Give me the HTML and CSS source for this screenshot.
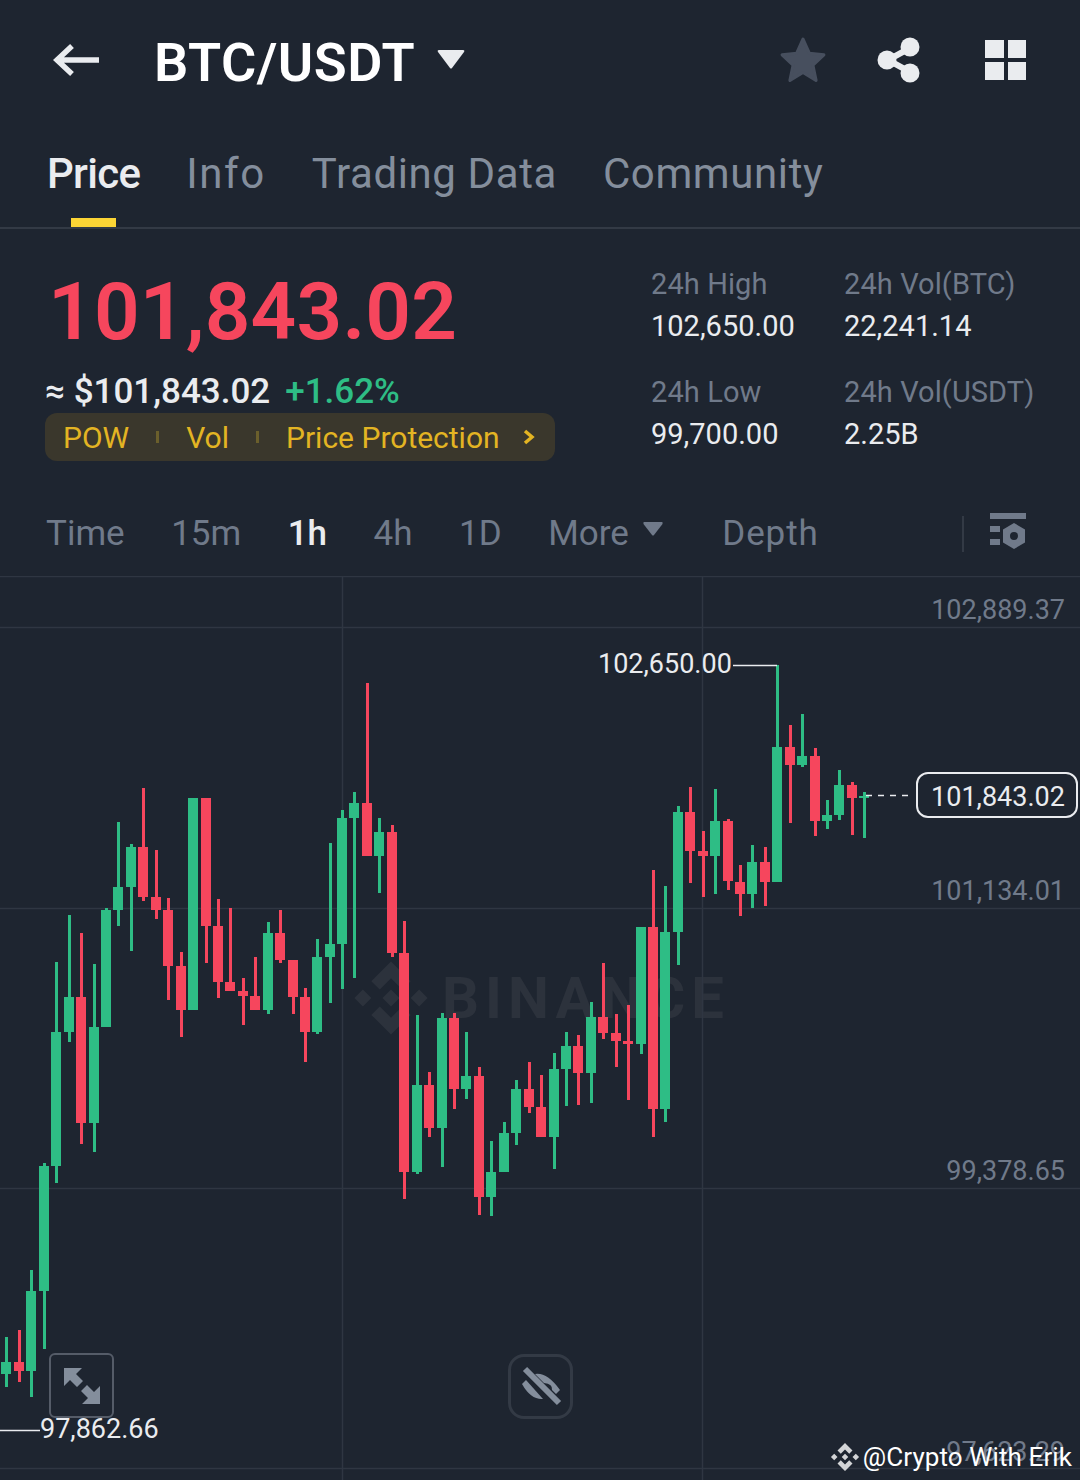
FILE: index.html
```html
<!DOCTYPE html>
<html lang="en">
<head>
    <meta charset="UTF-8">
    <meta name="viewport" content="width=device-width, initial-scale=1.0">
    <title>BTC/USDT</title>
    <link rel="stylesheet" href="styles.css">
</head>
<body>
    <header class="top-bar">
        <svg class="back" width="46" height="34" viewBox="0 0 46 34">
            <path d="M19 3 L4 17 L19 31 M4 17 H46" fill="none" stroke="#eaecef" stroke-width="5.500"/>
        </svg>
        <h1 class="pair">BTC/USDT</h1>
        <svg class="pair-caret" width="28" height="20" viewBox="0 0 28 20">
            <path d="M2 1 H26 Q28 1 27 3 L15 19 Q14 20 13 19 L1 3 Q0 1 2 1 Z" fill="#eaecef"/>
        </svg>
        <div class="top-icons">
            <svg width="48" height="48" viewBox="0 0 46 46">
                <path d="M23 3 L29 16.5 L43 18 L32.5 28 L35.5 42.5 L23 35 L10.500 42.500 L13.500 28 L3 18 L17 16.500 Z" fill="#474f5e" stroke="#474f5e" stroke-width="3" stroke-linejoin="round"/>
            </svg>
            <svg width="46" height="46" viewBox="0 0 46 46">
                <path d="M34 11 L12 23 L34 35" fill="none" stroke="#eaecef" stroke-width="6"/>
                <circle cx="34" cy="10" r="9.500" fill="#eaecef"/>
                <circle cx="11" cy="23" r="9.500" fill="#eaecef"/>
                <circle cx="34" cy="36" r="9.500" fill="#eaecef"/>
            </svg>
            <div class="grid-icon"><i></i><i></i><i></i><i></i></div>
        </div>
    </header>

    <nav class="tabs">
        <a class="tab active">Price</a>
        <a class="tab tab-info">Info</a>
        <a class="tab">Trading Data</a>
        <a class="tab">Community</a>
    </nav>

    <section class="stats">
        <div class="stats-left">
            <div class="last-price">101,843.02</div>
            <div class="sub-price">
                <span>≈ $101,843.02</span>
                <span class="up">+1.62%</span>
            </div>
            <div class="tags">
                <span>POW</span><i class="tag-sep"></i>
                <span>Vol</span><i class="tag-sep"></i>
                <span>Price Protection</span>
                <svg width="14" height="18" viewBox="0 0 14 18">
                    <path d="M3 3 L10 9 L3 15" fill="none" stroke="#e3b423" stroke-width="3.500"/>
                </svg>
            </div>
        </div>
        <div class="stats-right">
            <div class="stat"><label>24h High</label><b>102,650.00</b></div>
            <div class="stat"><label>24h Vol(BTC)</label><b>22,241.14</b></div>
            <div class="stat"><label>24h Low</label><b>99,700.00</b></div>
            <div class="stat"><label>24h Vol(USDT)</label><b>2.25B</b></div>
        </div>
    </section>

    <div class="intervals">
        <span>Time</span>
        <span>15m</span>
        <span class="active">1h</span>
        <span>4h</span>
        <span>1D</span>
        <span class="more">More
            <svg width="20" height="14" viewBox="0 0 20 14"><path d="M1 0 H19 Q20 0 19.500 2 L11 13 Q10 14 9 13 L0.500 2 Q0 0 1 0 Z" fill="#707a8a"/></svg>
        </span>
        <span class="depth">Depth</span>
        <i class="interval-sep"></i>
        <svg class="chart-settings" width="38" height="38" viewBox="0 0 38 38">
            <rect x="1" y="1" width="36" height="6" fill="#707a8a"/>
            <rect x="1" y="14" width="10" height="6" fill="#707a8a"/>
            <rect x="1" y="27" width="10" height="6" fill="#707a8a"/>
            <path d="M25 11 L36 17.500 V30.500 L25 37 L14 30.500 V17.500 Z M25 20 A4 4 0 1 0 25 28 A4 4 0 1 0 25 20 Z" fill="#707a8a" fill-rule="evenodd"/>
        </svg>
    </div>

    <main class="chart">
        <div class="watermark">
            <svg width="90" height="90" viewBox="0 0 32 32">
                <path d="M16 3 L23 10 L20 13 L16 9 L12 13 L9 10 Z M16 29 L23 22 L20 19 L16 23 L12 19 L9 22 Z M3 16 L6 13 L9 16 L6 19 Z M29 16 L26 13 L23 16 L26 19 Z M16 13 L19 16 L16 19 L13 16 Z" fill="#2c323c"/>
            </svg>
            <span>BINANCE</span>
        </div>

        <svg id="plot" class="plot" width="1080" height="904" viewBox="0 576 1080 904"></svg>

        <span class="axis-label y-889">102,889.37</span>
        <span class="axis-label y-134">101,134.01</span>
        <span class="axis-label y-378">99,378.65</span>
        <span class="axis-label y-623">97,623.29</span>

        <span class="mark high-mark">102,650.00</span>
        <span class="mark low-mark">97,862.66</span>
        <span class="price-pill">101,843.02</span>

        <div class="float-btn expand-btn">
            <svg width="40" height="40" viewBox="0 0 40 40">
                <path d="M2 2 H20 L14 8 L21 15 L15 21 L8 14 L2 20 Z M38 38 H20 L26 32 L19 25 L25 19 L32 26 L38 20 Z" fill="#848e9c"/>
            </svg>
        </div>
        <div class="float-btn hide-btn">
            <svg width="44" height="44" viewBox="0 0 44 44">
                <path d="M6 4 L40 38" stroke="#848e9c" stroke-width="6" fill="none"/>
                <path d="M16 9 Q28 7 41 25 L37 29 L33 25 Q34 19 25 18 Z" fill="#848e9c"/>
                <path d="M3 19 L7 15 L24 34 Q12 35 3 19 Z" fill="#848e9c"/>
            </svg>
        </div>

        <div class="credit">
            <svg width="30" height="30" viewBox="0 0 32 32">
                <path d="M16 1 L24 9 L20.500 12.500 L16 8 L11.500 12.500 L8 9 Z M16 31 L24 23 L20.500 19.500 L16 24 L11.500 19.500 L8 23 Z M1 16 L4.500 12.500 L8 16 L4.500 19.500 Z M31 16 L27.500 12.500 L24 16 L27.500 19.500 Z M16 12.500 L19.500 16 L16 19.500 L12.500 16 Z" fill="#d4d5d7"/>
            </svg>
            <span>@Crypto With Erik</span>
        </div>
    </main>

    <script src="chart.js"></script>
</body>
</html>
```

FILE: styles.css
```css
* {
    margin: 0;
    padding: 0;
    box-sizing: border-box;
}

body {
    width: 1080px;
    height: 1480px;
    overflow: hidden;
    background: #1e2530;
    color: #eaecef;
    font-family: 'Roboto', sans-serif;
}

.top-bar {
    height: 120px;
    display: flex;
    align-items: center;
    padding: 0 54px 0 53px;
}

.back {
    margin-right: 55px;
}

.pair {
    font-size: 54px;
    font-weight: 600;
    letter-spacing: 0.5px;
    color: #fff;
    margin: 4px 22px 0 0;
}

.pair-caret {
    margin-top: -2px;
}

.top-icons {
    margin-left: auto;
    display: flex;
    align-items: center;
    gap: 49px;
}

.grid-icon {
    width: 41px;
    height: 40px;
    margin-left: 14px;
    display: grid;
    grid-template-columns: 1fr 1fr;
    grid-template-rows: 1fr 1fr;
    gap: 4px;
}

.grid-icon i {
    background: #eaecef;
}

.tabs {
    height: 109px;
    display: flex;
    gap: 46px;
    padding: 29px 0 0 47px;
    border-bottom: 2px solid #333a45;
}

.tab {
    position: relative;
    font-size: 42px;
    line-height: 50px;
    letter-spacing: 0.6px;
    color: #848e9c;
}

.tab-info {
    letter-spacing: 1.6px;
}

.tab.active {
    color: #eaecef;
    font-weight: 500;
    letter-spacing: -0.7px;
}

.tab.active::after {
    content: "";
    position: absolute;
    left: 24px;
    top: 69px;
    width: 45px;
    height: 9px;
    background: #fcd535;
}

.stats {
    height: 250px;
    display: flex;
    justify-content: space-between;
}

.stats-left {
    padding: 38px 0 0 45px;
}

.last-price {
    font-size: 80px;
    font-weight: 600;
    line-height: 90px;
    letter-spacing: 0.2px;
    color: #f6465d;
    padding-left: 3px;
}

.sub-price {
    display: flex;
    gap: 15px;
    margin-top: 14px;
    font-size: 35px;
    font-weight: 500;
    line-height: 42px;
}

.up {
    color: #2ebd85;
}

.tags {
    width: 510px;
    height: 48px;
    display: flex;
    align-items: center;
    padding: 0 18px;
    background: #3a372c;
    border-radius: 12px;
    font-size: 30px;
    white-space: nowrap;
    color: #e3b423;
}

.tag-sep {
    width: 3px;
    height: 12px;
    margin: 0 27px 0 27px;
    background: #6b5f2c;
}

.tags svg {
    margin-left: 22px;
}

.stats-right {
    width: 429px;
    padding-top: 34px;
    display: grid;
    grid-template-columns: 193px 1fr;
    grid-auto-rows: 108px;
}

.stat label {
    display: block;
    font-size: 29px;
    line-height: 42px;
    letter-spacing: 0.1px;
    color: #707a8a;
}

.stat b {
    display: block;
    font-size: 29px;
    font-weight: 400;
    line-height: 42px;
    color: #eaecef;
}

.intervals {
    height: 97px;
    display: flex;
    align-items: center;
    gap: 46.500px;
    padding: 12px 53px 0 46px;
    font-size: 35px;
    color: #707a8a;
}

.intervals .active {
    color: #eaecef;
    font-weight: 500;
}

.more {
    display: flex;
    align-items: center;
    gap: 14px;
}

.more svg {
    margin-top: -10px;
}

.depth {
    margin-left: 13px;
    letter-spacing: 0.9px;
}

.interval-sep {
    width: 2px;
    height: 36px;
    margin-left: auto;
    margin-right: -21px;
    background: #333a45;
}

.chart-settings {
    margin-top: -6px;
}

.chart {
    position: relative;
    height: 904px;
}

.plot {
    position: absolute;
    left: 0;
    top: 0;
}

.watermark {
    position: absolute;
    left: 346px;
    top: 377px;
    display: flex;
    align-items: center;
    gap: 6px;
    font-size: 58px;
    font-weight: 700;
    letter-spacing: 6px;
    color: #2c323c;
}

.axis-label {
    position: absolute;
    right: 15px;
    font-size: 27px;
    line-height: 34px;
    color: #707a8a;
}

.y-889 { top: 17px; }
.y-134 { top: 298px; }
.y-378 { top: 578px; }
.y-623 { top: 859px; }

.mark {
    position: absolute;
    font-size: 27px;
    line-height: 34px;
    color: #eaecef;
}

.high-mark {
    left: 598px;
    top: 71px;
}

.low-mark {
    left: 40px;
    top: 836px;
}

.price-pill {
    position: absolute;
    left: 916px;
    top: 196px;
    width: 162px;
    height: 46px;
    display: flex;
    align-items: center;
    justify-content: center;
    padding: 3px 0 0 2px;
    background: #1e2530;
    border: 2px solid #eaecef;
    border-radius: 12px;
    font-size: 27px;
    color: #eaecef;
}

.float-btn {
    position: absolute;
    width: 65px;
    height: 65px;
    display: flex;
    align-items: center;
    justify-content: center;
}

.expand-btn {
    left: 49px;
    top: 777px;
    border: 2px solid #555c68;
    border-radius: 6px;
}

.hide-btn {
    left: 508px;
    top: 778px;
    border: 3px solid #333a45;
    border-radius: 16px;
}

.credit {
    position: absolute;
    right: 8px;
    bottom: 8px;
    display: flex;
    align-items: center;
    gap: 3px;
    font-size: 26px;
    letter-spacing: 0.1px;
    color: #fff;
}
```

FILE: chart.js
```js
// x, wick top, wick bottom, body top, body bottom, colour
const candles = [
    [6, 1337, 1387, 1362, 1374, 'g'], [19, 1330, 1382, 1362, 1371, 'r'],
    [31, 1270, 1397, 1291, 1371, 'g'], [44, 1163, 1349, 1166, 1291, 'g'],
    [56, 962, 1183, 1032, 1166, 'g'], [69, 915, 1042, 997, 1032, 'g'],
    [81, 933, 1144, 997, 1123, 'r'], [94, 964, 1152, 1027, 1123, 'g'],
    [106, 908, 1027, 910, 1027, 'g'], [118, 822, 926, 887, 910, 'g'],
    [131, 844, 951, 847, 887, 'g'], [143, 788, 901, 847, 897, 'r'],
    [156, 850, 919, 897, 910, 'r'], [168, 898, 1000, 910, 966, 'r'],
    [181, 952, 1037, 966, 1010, 'r'], [193, 798, 1010, 798, 1010, 'g'],
    [206, 798, 963, 798, 926, 'r'], [218, 899, 998, 926, 982, 'r'],
    [230, 908, 990, 982, 991, 'r'], [243, 978, 1025, 991, 996, 'r'],
    [255, 957, 1010, 996, 1010, 'r'], [268, 922, 1014, 933, 1010, 'g'],
    [280, 910, 963, 933, 960, 'r'], [293, 960, 1014, 960, 997, 'r'],
    [305, 988, 1062, 997, 1032, 'r'], [317, 939, 1034, 957, 1032, 'g'],
    [330, 843, 1003, 944, 957, 'g'], [342, 810, 989, 818, 944, 'g'],
    [354, 792, 978, 803, 818, 'g'], [367, 683, 856, 803, 856, 'r'],
    [379, 818, 893, 832, 856, 'g'], [392, 825, 957, 832, 953, 'r'],
    [404, 921, 1199, 953, 1172, 'r'], [417, 1015, 1174, 1085, 1172, 'g'],
    [429, 1072, 1137, 1085, 1128, 'r'], [442, 1013, 1167, 1018, 1128, 'g'],
    [454, 1013, 1109, 1018, 1089, 'r'], [466, 1032, 1099, 1076, 1089, 'g'],
    [479, 1067, 1215, 1076, 1197, 'r'], [491, 1141, 1216, 1172, 1197, 'g'],
    [504, 1122, 1172, 1133, 1172, 'g'], [516, 1080, 1145, 1089, 1133, 'g'],
    [529, 1062, 1113, 1089, 1107, 'r'], [541, 1075, 1137, 1107, 1137, 'r'],
    [554, 1053, 1169, 1069, 1137, 'g'], [566, 1032, 1106, 1046, 1069, 'g'],
    [578, 1035, 1105, 1046, 1073, 'r'], [591, 1002, 1103, 1017, 1073, 'g'],
    [603, 963, 1039, 1017, 1033, 'r'], [616, 1014, 1067, 1033, 1041, 'r'],
    [628, 1005, 1100, 1041, 1044, 'r'], [641, 927, 1054, 927, 1044, 'g'],
    [653, 870, 1137, 927, 1109, 'r'], [665, 886, 1122, 932, 1109, 'g'],
    [678, 806, 965, 812, 932, 'g'], [690, 787, 883, 812, 851, 'r'],
    [703, 831, 897, 851, 856, 'r'], [715, 789, 894, 821, 856, 'g'],
    [728, 819, 890, 821, 881, 'r'], [740, 865, 916, 882, 894, 'r'],
    [752, 845, 908, 862, 894, 'g'], [765, 847, 906, 862, 882, 'r'],
    [777, 665, 882, 747, 882, 'g'], [790, 725, 823, 747, 765, 'r'],
    [802, 714, 767, 756, 765, 'g'], [815, 748, 836, 756, 821, 'r'],
    [827, 800, 829, 815, 821, 'g'], [839, 770, 820, 785, 815, 'g'],
    [852, 782, 835, 785, 798, 'r'], [864, 792, 838, 796, 798, 'g']
];

const colors = { g: '#2ebd85', r: '#f6465d' };
const plot = document.getElementById('plot');

function addEl(tag, attrs) {
    const el = document.createElementNS('http://www.w3.org/2000/svg', tag);
    for (const key in attrs) el.setAttribute(key, attrs[key]);
    plot.appendChild(el);
}

function addLine(x1, y1, x2, y2, stroke, width, dash) {
    const attrs = { x1, y1, x2, y2, stroke, 'stroke-width': width };
    if (dash) attrs['stroke-dasharray'] = dash;
    addEl('line', attrs);
}

// grid
[576, 627, 908, 1188, 1468].forEach(y => addLine(0, y + 0.5, 1080, y + 0.5, '#2f3642', 1.5));
[342, 702].forEach(x => addLine(x + 0.5, 576, x + 0.5, 1480, '#2f3642', 1.5));

// candles
candles.forEach(([x, wickTop, wickBottom, bodyTop, bodyBottom, c]) => {
    addEl('rect', { x: x - 1, y: wickTop, width: 3, height: wickBottom - wickTop, fill: colors[c] });
    addEl('rect', { x: x - 5, y: bodyTop, width: 10, height: Math.max(bodyBottom - bodyTop, 2), fill: colors[c] });
});

// high, low and last price leaders
addLine(733, 665.5, 777, 665.5, '#eaecef', 1.5);
addLine(0, 1430.5, 40, 1430.5, '#eaecef', 1.5);
addLine(866, 795.5, 914, 795.5, '#eaecef', 1.5, '6 6');
```
